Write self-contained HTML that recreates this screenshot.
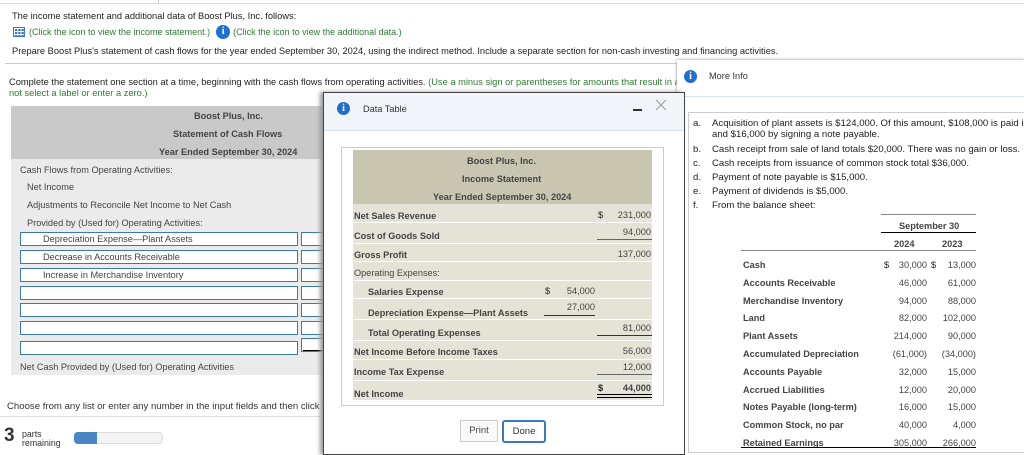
<!DOCTYPE html>
<html><head><style>
*{margin:0;padding:0;box-sizing:border-box}
body{width:1024px;height:455px;overflow:hidden;background:#fff;font-family:"Liberation Sans",Arial,sans-serif;font-size:9.2px;color:#222;position:relative}
.a{position:absolute;white-space:nowrap}
.g{color:#2e7d32}
.b{font-weight:bold}
.inp{position:absolute;background:#fff;border:1px solid #3a7ca5;height:14px}
.ico{position:absolute;width:14px;height:14px;border-radius:50%;background:#1f6fd1;color:#fff;font:bold 10px "Liberation Serif",serif;text-align:center;line-height:14px}
.r{text-align:right}
</style></head><body>
<div class="a" style="left:158px;top:0;width:1px;height:4px;background:#ccc"></div>
<div class="a" style="left:0;top:3px;width:1024px;height:1px;background:#ddd"></div>
<div class="a" style="left:12px;top:11px;font-size:9.3px">The income statement and additional data of Boost Plus, Inc. follows:</div>
<div class="a" style="left:13px;top:25px;display:flex;align-items:center;font-size:9px">
<span style="display:inline-block;width:12px;height:10px;background:#3b78c4;border:1px solid #3b78c4;background-image:linear-gradient(#fff 1px,transparent 1px),linear-gradient(90deg,#fff 1px,transparent 1px);background-size:3.3px 3px;margin-right:4px"></span>
<span class="g">(Click the icon to view the income statement.)</span>
<span style="display:inline-block;width:14px;height:14px;border-radius:50%;background:#1f6fd1;color:#fff;font:bold 10px 'Liberation Serif',serif;text-align:center;line-height:14px;margin:0 3px 0 6px">i</span>
<span class="g">(Click the icon to view the additional data.)</span></div>
<div class="a" style="left:12px;top:46px;font-size:9.3px">Prepare Boost Plus's statement of cash flows for the year ended September 30, 2024, using the indirect method. Include a separate section for non-cash investing and financing activities.</div>
<div class="a" style="left:5px;top:63px;width:1019px;height:1px;background:#ccc"></div>
<div class="a" style="left:9px;top:77px;font-size:9.3px">Complete the statement one section at a time, beginning with the cash flows from operating activities. <span class="g">(Use a minus sign or parentheses for amounts that result in a decrease in cash. If a box is not used in the statement, leave the box empty; do</span></div>
<div class="a g" style="left:9px;top:88px;font-size:9.3px">not select a label or enter a zero.)</div>

<div class="a" style="left:11px;top:106px;width:320px;height:53px;background:#c9c9c9"></div>
<div class="a" style="left:11px;top:159px;width:320px;height:216px;background:#ebebeb"></div>
<div class="a b" style="left:194px;top:111px;color:#444">Boost Plus, Inc.</div>
<div class="a b" style="left:173px;top:129px;color:#444">Statement of Cash Flows</div>
<div class="a b" style="left:159px;top:147px;color:#444">Year Ended September 30, 2024</div>
<div class="a" style="left:20px;top:165px;color:#444">Cash Flows from Operating Activities:</div>
<div class="a" style="left:27px;top:182px;color:#444">Net Income</div>
<div class="a" style="left:27px;top:200px;color:#444">Adjustments to Reconcile Net Income to Net Cash</div>
<div class="a" style="left:27px;top:218px;color:#444">Provided by (Used for) Operating Activities:</div>
<div class="inp" style="left:20px;top:232px;width:278px"><span class="a" style="left:22px;top:1px;color:#444">Depreciation Expense—Plant Assets</span></div>
<div class="inp" style="left:20px;top:250px;width:278px"><span class="a" style="left:22px;top:1px;color:#444">Decrease in Accounts Receivable</span></div>
<div class="inp" style="left:20px;top:268px;width:278px"><span class="a" style="left:22px;top:1px;color:#444">Increase in Merchandise Inventory</span></div>
<div class="inp" style="left:20px;top:286px;width:278px"></div>
<div class="inp" style="left:20px;top:303px;width:278px"></div>
<div class="inp" style="left:20px;top:321px;width:278px"></div>
<div class="inp" style="left:20px;top:341px;width:278px"></div>
<div class="inp" style="left:301px;top:232px;width:30px"></div>
<div class="inp" style="left:301px;top:250px;width:30px"></div>
<div class="inp" style="left:301px;top:268px;width:30px"></div>
<div class="inp" style="left:301px;top:286px;width:30px"></div>
<div class="inp" style="left:301px;top:303px;width:30px"></div>
<div class="inp" style="left:301px;top:321px;width:30px"></div>
<div class="inp" style="left:301px;top:338px;width:30px"></div>
<div class="a" style="left:303px;top:350px;width:28px;height:1px;background:#000"></div>
<div class="a" style="left:20px;top:362px;color:#444">Net Cash Provided by (Used for) Operating Activities</div>
<div class="a" style="left:7px;top:401px;font-size:9.6px;color:#333">Choose from any list or enter any number in the input fields and then click Check Answer.</div>
<div class="a" style="left:0;top:416px;width:330px;height:1px;background:#ddd"></div>
<div class="a b" style="left:4px;top:425px;font-size:19px;color:#333">3</div>
<div class="a" style="left:22px;top:430px;font-size:8.8px;line-height:9px;color:#333">parts<br>remaining</div>
<div class="a" style="left:74px;top:432px;width:89px;height:12px;border:1px solid #ddd;border-radius:4px;background:#f3f3f3"></div>
<div class="a" style="left:74px;top:432px;width:23px;height:12px;border-radius:4px 0 0 4px;background:#4a86c5"></div>

<!-- More info -->
<div class="a" style="left:677px;top:60px;width:347px;height:395px;background:#fff;box-shadow:0 0 3px #888"></div>
<div class="a" style="left:677px;top:96px;width:347px;height:1px;background:#d8e4f0"></div>
<div class="ico" style="left:684px;top:70px;width:13px;height:13px;line-height:13px">i</div>
<div class="a" style="left:709px;top:71px;color:#333">More Info</div>
<div class="a" style="left:688px;top:112px;width:340px;height:341px;border:1px solid #ccc"></div>
<div class="a" style="left:693px;top:118px;line-height:11px;font-size:9.6px">a.</div>
<div class="a" style="left:712px;top:118px;line-height:11px;font-size:9.6px">Acquisition of plant assets is $124,000. Of this amount, $108,000 is paid in cash<br>and $16,000 by signing a note payable.</div>
<div class="a" style="left:693px;top:144px;font-size:9.6px">b.</div><div class="a" style="left:712px;top:144px;font-size:9.6px">Cash receipt from sale of land totals $20,000. There was no gain or loss.</div>
<div class="a" style="left:693px;top:158px;font-size:9.6px">c.</div><div class="a" style="left:712px;top:158px;font-size:9.6px">Cash receipts from issuance of common stock total $36,000.</div>
<div class="a" style="left:693px;top:172px;font-size:9.6px">d.</div><div class="a" style="left:712px;top:172px;font-size:9.6px">Payment of note payable is $15,000.</div>
<div class="a" style="left:693px;top:186px;font-size:9.6px">e.</div><div class="a" style="left:712px;top:186px;font-size:9.6px">Payment of dividends is $5,000.</div>
<div class="a" style="left:693px;top:200px;font-size:9.6px">f.</div><div class="a" style="left:712px;top:200px;font-size:9.6px">From the balance sheet:</div>
<div class="a" style="left:881px;top:214px;width:95px;height:1px;background:#888"></div>
<div class="a b" style="left:899px;top:221px;color:#444">September 30</div>
<div class="a" style="left:881px;top:232px;width:95px;height:1px;background:#000"></div>
<div class="a b" style="left:894px;top:239px;color:#444">2024</div>
<div class="a b" style="left:942px;top:239px;color:#444">2023</div>
<div class="a" style="left:741px;top:250px;width:235px;height:1px;background:#888"></div>
<div class="a b" style="left:743px;top:257px;color:#444;line-height:17.8px">Cash<br>Accounts Receivable<br>Merchandise Inventory<br>Land<br>Plant Assets<br>Accumulated Depreciation<br>Accounts Payable<br>Accrued Liabilities<br>Notes Payable (long-term)<br>Common Stock, no par<br>Retained Earnings</div>
<div class="a" style="left:884px;top:257px;line-height:17.8px">$</div>
<div class="a r" style="left:870px;top:257px;width:57px;line-height:17.8px;color:#444">30,000<br>46,000<br>94,000<br>82,000<br>214,000<br>(61,000)<br>32,000<br>12,000<br>16,000<br>40,000<br>305,000</div>
<div class="a" style="left:931px;top:257px;line-height:17.8px">$</div>
<div class="a r" style="left:930px;top:257px;width:46px;line-height:17.8px;color:#444">13,000<br>61,000<br>88,000<br>102,000<br>90,000<br>(34,000)<br>15,000<br>20,000<br>15,000<br>4,000<br>266,000</div>
<div class="a" style="left:741px;top:447px;width:235px;height:1px;background:#000"></div>

<!-- Data table -->
<div class="a" style="left:323px;top:92px;width:362px;height:363px;background:#fff;border:1px solid #444;box-shadow:-3px 0 4px #999"></div>
<div class="a" style="left:324px;top:93px;width:360px;height:38px;background:#f1f5fa;border-bottom:1px solid #d6e4f2"></div>
<div class="ico" style="left:337px;top:102px;width:13px;height:13px;line-height:13px">i</div>
<div class="a" style="left:363px;top:104px;color:#333">Data Table</div>
<div class="a" style="left:633px;top:109px;width:9px;height:2px;background:#333"></div>
<svg class="a" style="left:655px;top:99px" width="12" height="12"><path d="M1 1L11 11M11 1L1 11" stroke="#999" stroke-width="1"/></svg>
<div class="a" style="left:341px;top:147px;width:323px;height:259px;border:1px solid #ccc"></div>
<div class="a" style="left:353px;top:150px;width:299px;height:54px;background:#c8c6b1"></div>
<div class="a" style="left:353px;top:204px;width:299px;height:196px;background:#e5e3d6"></div>
<div class="a b" style="left:467px;top:156px;color:#444">Boost Plus, Inc.</div>
<div class="a b" style="left:462px;top:174px;color:#444">Income Statement</div>
<div class="a b" style="left:433px;top:192px;color:#444">Year Ended September 30, 2024</div>
<div class="a" style="left:353px;top:222px;width:299px;height:1px;background:#fff"></div>
<div class="a" style="left:353px;top:243px;width:299px;height:1px;background:#fff"></div>
<div class="a" style="left:353px;top:261px;width:299px;height:1px;background:#fff"></div>
<div class="a" style="left:353px;top:280px;width:299px;height:1px;background:#fff"></div>
<div class="a" style="left:353px;top:298px;width:299px;height:1px;background:#fff"></div>
<div class="a" style="left:353px;top:319px;width:299px;height:1px;background:#fff"></div>
<div class="a" style="left:353px;top:340px;width:299px;height:1px;background:#fff"></div>
<div class="a" style="left:353px;top:359px;width:299px;height:1px;background:#fff"></div>
<div class="a" style="left:353px;top:380px;width:299px;height:1px;background:#fff"></div>
<div class="a b" style="left:354px;top:211px;color:#444">Net Sales Revenue</div>
<div class="a b" style="left:354px;top:231px;color:#444">Cost of Goods Sold</div>
<div class="a b" style="left:354px;top:250px;color:#444">Gross Profit</div>
<div class="a" style="left:354px;top:268px;color:#444">Operating Expenses:</div>
<div class="a b" style="left:368px;top:287px;color:#444">Salaries Expense</div>
<div class="a b" style="left:368px;top:308px;color:#444">Depreciation Expense—Plant Assets</div>
<div class="a b" style="left:368px;top:328px;color:#444">Total Operating Expenses</div>
<div class="a b" style="left:354px;top:347px;color:#444">Net Income Before Income Taxes</div>
<div class="a b" style="left:354px;top:367px;color:#444">Income Tax Expense</div>
<div class="a b" style="left:354px;top:389px;color:#444">Net Income</div>
<div class="a" style="left:598px;top:210px">$</div>
<div class="a r" style="left:600px;top:210px;width:51px;color:#444">231,000</div>
<div class="a r" style="left:600px;top:227px;width:51px;color:#444">94,000</div>
<div class="a" style="left:597px;top:239px;width:55px;height:1px;background:#666"></div>
<div class="a r" style="left:600px;top:249px;width:51px;color:#444">137,000</div>
<div class="a" style="left:545px;top:286px">$</div>
<div class="a r" style="left:560px;top:286px;width:35px;color:#444">54,000</div>
<div class="a r" style="left:560px;top:302px;width:35px;color:#444">27,000</div>
<div class="a" style="left:544px;top:315px;width:51px;height:1px;background:#333"></div>
<div class="a r" style="left:600px;top:323px;width:51px;color:#444">81,000</div>
<div class="a" style="left:597px;top:335px;width:55px;height:1px;background:#333"></div>
<div class="a r" style="left:600px;top:346px;width:51px;color:#444">56,000</div>
<div class="a r" style="left:600px;top:362px;width:51px;color:#444">12,000</div>
<div class="a" style="left:597px;top:374px;width:55px;height:1px;background:#666"></div>
<div class="a b" style="left:598px;top:383px">$</div>
<div class="a r b" style="left:600px;top:383px;width:51px;color:#444">44,000</div>
<div class="a" style="left:597px;top:394px;width:55px;height:4px;border-top:1px solid #000;border-bottom:1px solid #000"></div>
<div class="a" style="left:460px;top:420px;width:38px;height:22px;border:1px solid #ccc;background:#fafafa;text-align:center;line-height:20px;color:#444;font-size:9.5px">Print</div>
<div class="a" style="left:502px;top:420px;width:44px;height:23px;border:2px solid #3a78c2;border-radius:3px;background:#fff;text-align:center;line-height:19px;color:#333;font-size:9.5px">Done</div>
</body></html>
